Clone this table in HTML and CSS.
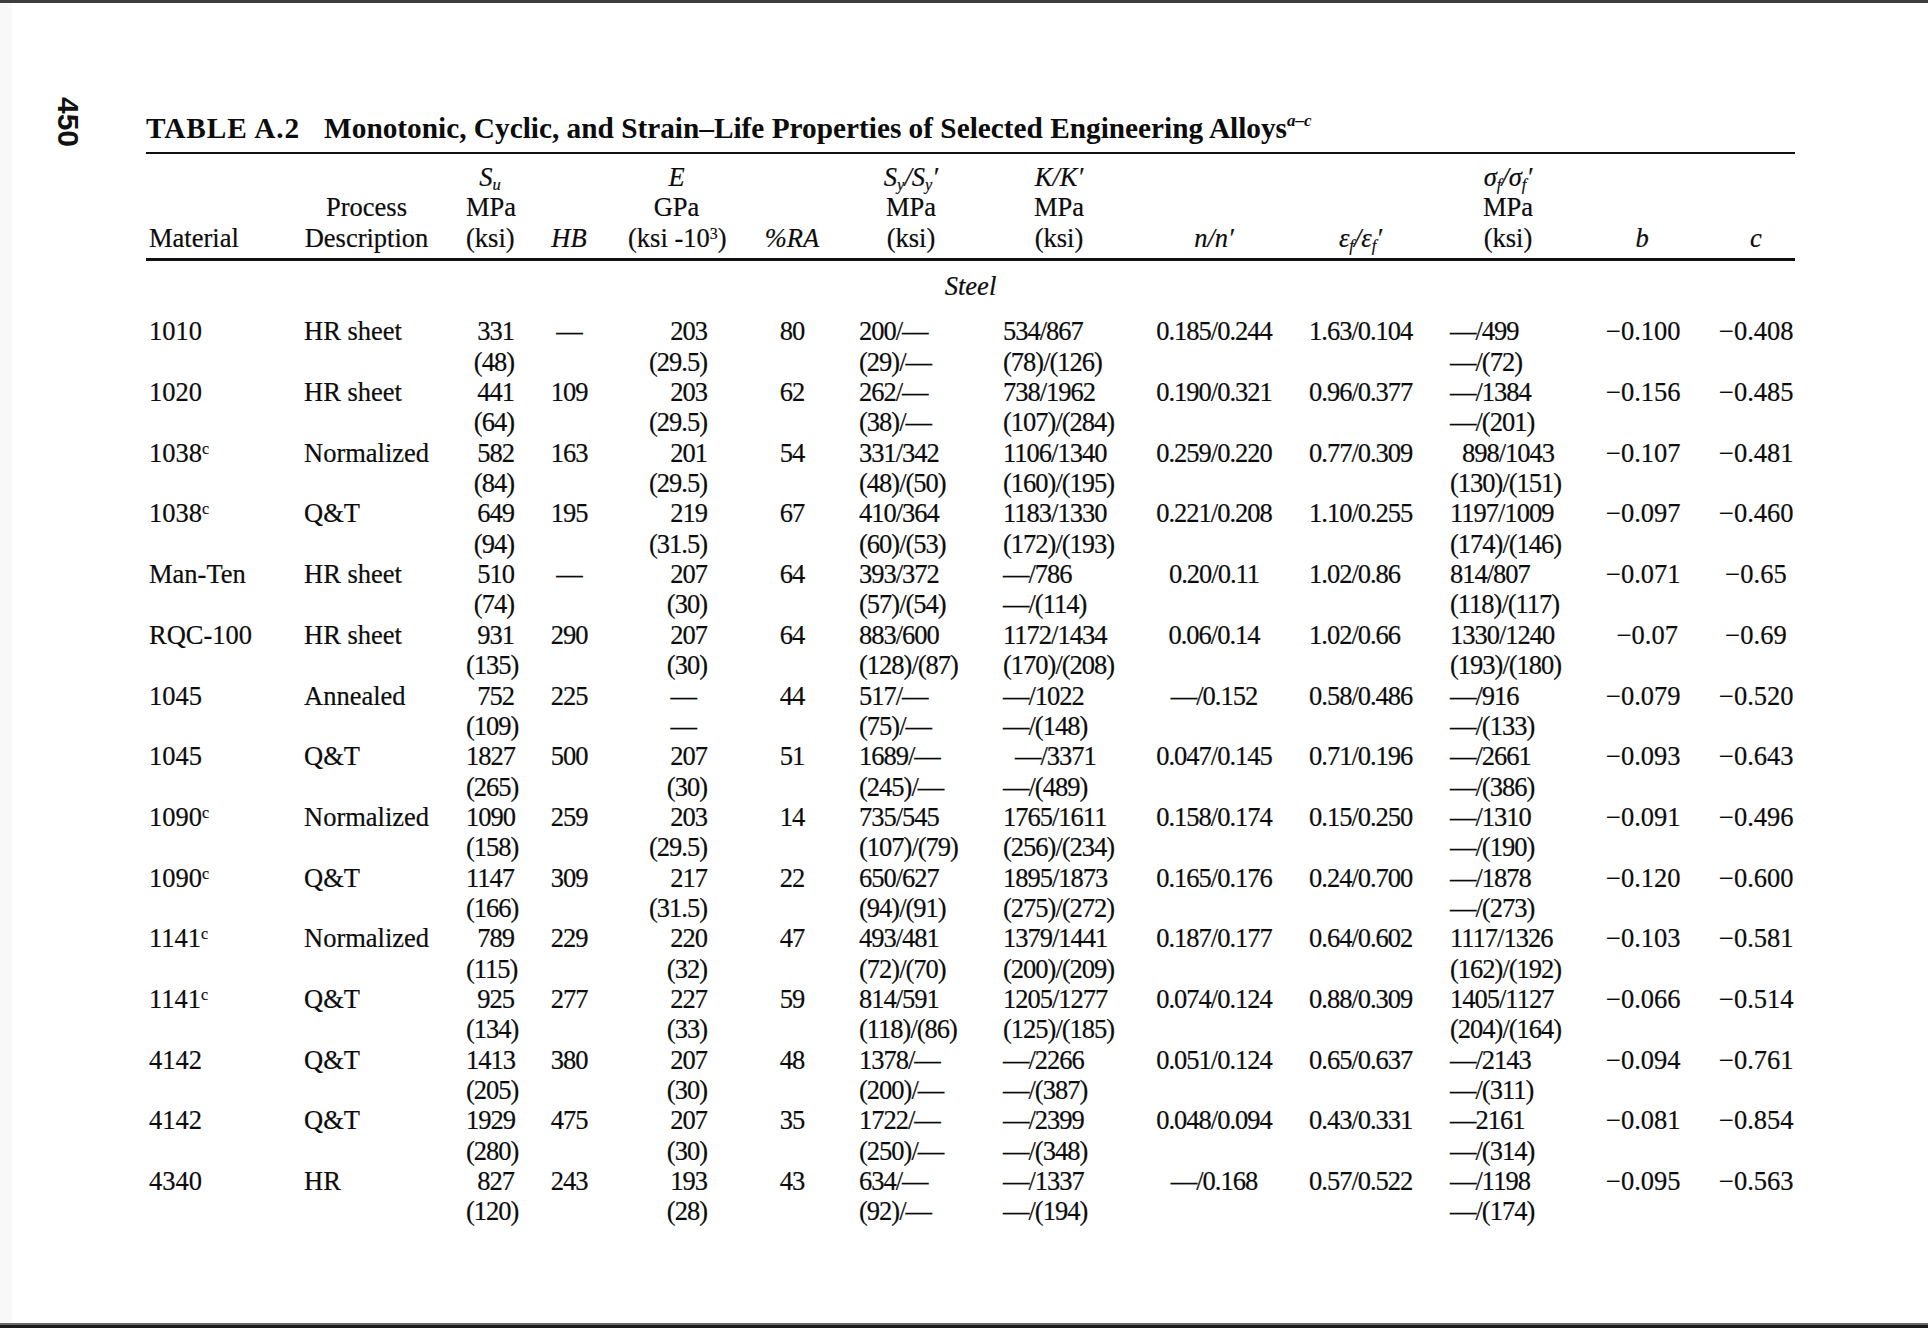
FILE: index.html
```html
<!DOCTYPE html>
<html lang="en">
<head>
<meta charset="utf-8">
<title>Table A.2</title>
<link rel="stylesheet" href="styles.css">
</head>
<body>
<div class="page">
  <div class="sheet">
    <div class="folio">450</div>
    <div class="main">
      <h1 class="title"><span class="label">TABLE A.2</span>Monotonic, Cyclic, and Strain–Life Properties of Selected Engineering Alloys<sup class="fn">a–c</sup></h1>
      <table class="props">
        <colgroup>
          <col class="w1"><col class="w2"><col class="w3"><col class="w4"><col class="w5"><col class="w6"><col class="w7"><col class="w8"><col class="w9"><col class="w10"><col class="w11"><col class="w12"><col class="w13">
        </colgroup>
        <thead>
          <tr>
            <th>Material</th>
            <th>Process<br>Description</th>
            <th><i>S<sub>u</sub></i><br>MPa<br>(ksi)</th>
            <th><i>HB</i></th>
            <th><i>E</i><br>GPa<br>(ksi -10<sup>3</sup>)</th>
            <th><i>%RA</i></th>
            <th><i>S<sub>y</sub>/S<sub>y</sub>′</i><br>MPa<br>(ksi)</th>
            <th><i>K/K′</i><br>MPa<br>(ksi)</th>
            <th><i>n/n′</i></th>
            <th><i>ε<sub>f</sub>/ε<sub>f</sub>′</i></th>
            <th><i>σ<sub>f</sub>/σ<sub>f</sub>′</i><br>MPa<br>(ksi)</th>
            <th><i>b</i></th>
            <th><i>c</i></th>
          </tr>
        </thead>
        <tbody>
          <tr class="group"><td colspan="13"><i>Steel</i></td></tr>
          <tr><td>1010</td><td>HR sheet</td><td>331<br>(48)</td><td>—</td><td>203<br>(29.5)</td><td>80</td><td>200/—<br>(29)/—</td><td>534/867<br>(78)/(126)</td><td>0.185/0.244</td><td>1.63/0.104</td><td>—/499<br>—/(72)</td><td>−0.100</td><td>−0.408</td></tr>
          <tr><td>1020</td><td>HR sheet</td><td>441<br>(64)</td><td>109</td><td>203<br>(29.5)</td><td>62</td><td>262/—<br>(38)/—</td><td>738/1962<br>(107)/(284)</td><td>0.190/0.321</td><td>0.96/0.377</td><td>—/1384<br>—/(201)</td><td>−0.156</td><td>−0.485</td></tr>
          <tr><td>1038<sup>c</sup></td><td>Normalized</td><td>582<br>(84)</td><td>163</td><td>201<br>(29.5)</td><td>54</td><td>331/342<br>(48)/(50)</td><td>1106/1340<br>(160)/(195)</td><td>0.259/0.220</td><td>0.77/0.309</td><td><span class="indent">898/1043</span><br>(130)/(151)</td><td>−0.107</td><td>−0.481</td></tr>
          <tr><td>1038<sup>c</sup></td><td>Q&amp;T</td><td>649<br>(94)</td><td>195</td><td>219<br>(31.5)</td><td>67</td><td>410/364<br>(60)/(53)</td><td>1183/1330<br>(172)/(193)</td><td>0.221/0.208</td><td>1.10/0.255</td><td>1197/1009<br>(174)/(146)</td><td>−0.097</td><td>−0.460</td></tr>
          <tr><td>Man-Ten</td><td>HR sheet</td><td>510<br>(74)</td><td>—</td><td>207<br>(30)</td><td>64</td><td>393/372<br>(57)/(54)</td><td>—/786<br>—/(114)</td><td>0.20/0.11</td><td>1.02/0.86</td><td>814/807<br>(118)/(117)</td><td>−0.071</td><td>−0.65</td></tr>
          <tr><td>RQC-100</td><td>HR sheet</td><td>931<br>(135)</td><td>290</td><td>207<br>(30)</td><td>64</td><td>883/600<br>(128)/(87)</td><td>1172/1434<br>(170)/(208)</td><td>0.06/0.14</td><td>1.02/0.66</td><td>1330/1240<br>(193)/(180)</td><td>−0.07</td><td>−0.69</td></tr>
          <tr><td>1045</td><td>Annealed</td><td>752<br>(109)</td><td>225</td><td><span class="dash">—<br>—</span></td><td>44</td><td>517/—<br>(75)/—</td><td>—/1022<br>—/(148)</td><td>—/0.152</td><td>0.58/0.486</td><td>—/916<br>—/(133)</td><td>−0.079</td><td>−0.520</td></tr>
          <tr><td>1045</td><td>Q&amp;T</td><td>1827<br>(265)</td><td>500</td><td>207<br>(30)</td><td>51</td><td>1689/—<br>(245)/—</td><td><span class="indent">—/3371</span><br>—/(489)</td><td>0.047/0.145</td><td>0.71/0.196</td><td>—/2661<br>—/(386)</td><td>−0.093</td><td>−0.643</td></tr>
          <tr><td>1090<sup>c</sup></td><td>Normalized</td><td>1090<br>(158)</td><td>259</td><td>203<br>(29.5)</td><td>14</td><td>735/545<br>(107)/(79)</td><td>1765/1611<br>(256)/(234)</td><td>0.158/0.174</td><td>0.15/0.250</td><td>—/1310<br>—/(190)</td><td>−0.091</td><td>−0.496</td></tr>
          <tr><td>1090<sup>c</sup></td><td>Q&amp;T</td><td>1147<br>(166)</td><td>309</td><td>217<br>(31.5)</td><td>22</td><td>650/627<br>(94)/(91)</td><td>1895/1873<br>(275)/(272)</td><td>0.165/0.176</td><td>0.24/0.700</td><td>—/1878<br>—/(273)</td><td>−0.120</td><td>−0.600</td></tr>
          <tr><td>1141<sup>c</sup></td><td>Normalized</td><td>789<br>(115)</td><td>229</td><td>220<br>(32)</td><td>47</td><td>493/481<br>(72)/(70)</td><td>1379/1441<br>(200)/(209)</td><td>0.187/0.177</td><td>0.64/0.602</td><td>1117/1326<br>(162)/(192)</td><td>−0.103</td><td>−0.581</td></tr>
          <tr><td>1141<sup>c</sup></td><td>Q&amp;T</td><td>925<br>(134)</td><td>277</td><td>227<br>(33)</td><td>59</td><td>814/591<br>(118)/(86)</td><td>1205/1277<br>(125)/(185)</td><td>0.074/0.124</td><td>0.88/0.309</td><td>1405/1127<br>(204)/(164)</td><td>−0.066</td><td>−0.514</td></tr>
          <tr><td>4142</td><td>Q&amp;T</td><td>1413<br>(205)</td><td>380</td><td>207<br>(30)</td><td>48</td><td>1378/—<br>(200)/—</td><td>—/2266<br>—/(387)</td><td>0.051/0.124</td><td>0.65/0.637</td><td>—/2143<br>—/(311)</td><td>−0.094</td><td>−0.761</td></tr>
          <tr><td>4142</td><td>Q&amp;T</td><td>1929<br>(280)</td><td>475</td><td>207<br>(30)</td><td>35</td><td>1722/—<br>(250)/—</td><td>—/2399<br>—/(348)</td><td>0.048/0.094</td><td>0.43/0.331</td><td>—2161<br>—/(314)</td><td>−0.081</td><td>−0.854</td></tr>
          <tr><td>4340</td><td>HR</td><td>827<br>(120)</td><td>243</td><td>193<br>(28)</td><td>43</td><td>634/—<br>(92)/—</td><td>—/1337<br>—/(194)</td><td>—/0.168</td><td>0.57/0.522</td><td>—/1198<br>—/(174)</td><td>−0.095</td><td>−0.563</td></tr>
        </tbody>
      </table>
    </div>
  </div>
  <div class="edge-bottom"></div>
</div>
</body>
</html>
```
FILE: styles.css
```css
html, body {
  margin: 0;
  padding: 0;
  background: #ffffff;
}

.page {
  width: 1928px;
  height: 1328px;
  box-sizing: border-box;
  border-top: 3px solid #3d3d3d;
  display: flex;
  flex-direction: column;
  background: #ffffff;
  color: #0c0c0c;
  font-family: "Liberation Serif", "Times New Roman", serif;
  overflow: hidden;
}

.sheet {
  flex: 1;
  display: flex;
  align-items: flex-start;
  border-left: 12px solid #f8f8f8;
}

.folio {
  writing-mode: vertical-rl;
  font-family: "Liberation Sans", Arial, sans-serif;
  font-weight: bold;
  font-size: 30px;
  line-height: 30px;
  margin-left: 41px;
  margin-top: 94px;
  color: #111111;
}

.main {
  margin-left: 63px;
  padding-top: 107px;
}

.title {
  margin: 0;
  font-size: 29.3px;
  line-height: 36px;
  font-weight: bold;
  white-space: nowrap;
}

.title .label {
  letter-spacing: 0.9px;
  margin-right: 24px;
}

.title .fn {
  font-style: italic;
  font-size: 17px;
  font-weight: bold;
  vertical-align: 12px;
  line-height: 0;
  margin-left: 0;
}

.props {
  margin-top: 6px;
  width: 1649px;
  table-layout: fixed;
  border-collapse: separate;
  border-spacing: 0;
  border-top: 2px solid #111111;
  font-size: 26.5px;
  line-height: 30.35px;
  -webkit-text-stroke: 0.2px #0c0c0c;
}

.w1 { width: 154px; }
.w2 { width: 140px; }
.w3 { width: 95px; }
.w4 { width: 70px; }
.w5 { width: 140px; }
.w6 { width: 95px; }
.w7 { width: 150px; }
.w8 { width: 150px; }
.w9 { width: 150px; }
.w10 { width: 140px; }
.w11 { width: 155px; }
.w12 { width: 115px; }
.w13 { width: 95px; }

.props th {
  font-weight: normal;
  vertical-align: bottom;
  text-align: center;
  padding-top: 8px;
  padding-bottom: 5px;
  border-bottom: 3px solid #111111;
  white-space: nowrap;
}

.props td {
  vertical-align: top;
  white-space: nowrap;
  padding-top: 0;
  padding-bottom: 0;
  letter-spacing: -1px;
}

.props sub {
  font-size: 0.62em;
  vertical-align: -0.22em;
  line-height: 0;
}

.props sup {
  font-size: 0.6em;
  vertical-align: 0.5em;
  line-height: 0;
  letter-spacing: 0;
}

.props .group td {
  text-align: center;
  padding-top: 10px;
  padding-bottom: 15px;
  letter-spacing: 0;
}

.props th:nth-child(1), .props td:nth-child(1) { padding-left: 3px; padding-right: 0; text-align: left; letter-spacing: 0; }
.props th:nth-child(2), .props td:nth-child(2) { padding-left: 4px; padding-right: 11px; letter-spacing: 0; }
.props td:nth-child(2) { text-align: left; }
.props th:nth-child(3), .props td:nth-child(3) { padding-left: 26px; padding-right: 21px; }
.props td:nth-child(3) { text-align: right; }
.props th:nth-child(4), .props td:nth-child(4) { padding-left: 10px; padding-right: 12px; text-align: center; }
.props th:nth-child(5) { padding-left: 23px; padding-right: 20px; }
.props td:nth-child(5) { padding-left: 23px; padding-right: 38px; text-align: right; }
.props th:nth-child(6), .props td:nth-child(6) { padding-left: 0; padding-right: 1px; text-align: center; }
.props th:nth-child(7), .props td:nth-child(7) { padding-left: 19px; padding-right: 27px; }
.props td:nth-child(7) { text-align: left; }
.props th:nth-child(8), .props td:nth-child(8) { padding-left: 13px; padding-right: 25px; }
.props td:nth-child(8) { text-align: left; }
.props th:nth-child(9), .props td:nth-child(9) { padding-left: 10px; padding-right: 12px; text-align: center; }
.props th:nth-child(10), .props td:nth-child(10) { padding-left: 19px; padding-right: 18px; }
.props td:nth-child(10) { text-align: left; }
.props th:nth-child(11), .props td:nth-child(11) { padding-left: 20px; padding-right: 19px; }
.props td:nth-child(11) { text-align: left; }
.props th:nth-child(12), .props td:nth-child(12) { padding-left: 21px; padding-right: 22px; letter-spacing: 0; }
.props td:nth-child(12) { text-align: right; }
.props th:nth-child(13), .props td:nth-child(13) { padding-left: 19px; padding-right: 2px; text-align: center; letter-spacing: 0; }

.props .group td:nth-child(1) {
  text-align: center;
  padding-left: 0;
}

.indent {
  display: inline-block;
  padding-left: 12px;
}

.dash {
  display: inline-block;
  margin-right: 11px;
}

.edge-bottom {
  height: 5px;
  box-sizing: border-box;
  border-top: 2px solid #6a6a6a;
  background: #1c1c1c;
}
```
